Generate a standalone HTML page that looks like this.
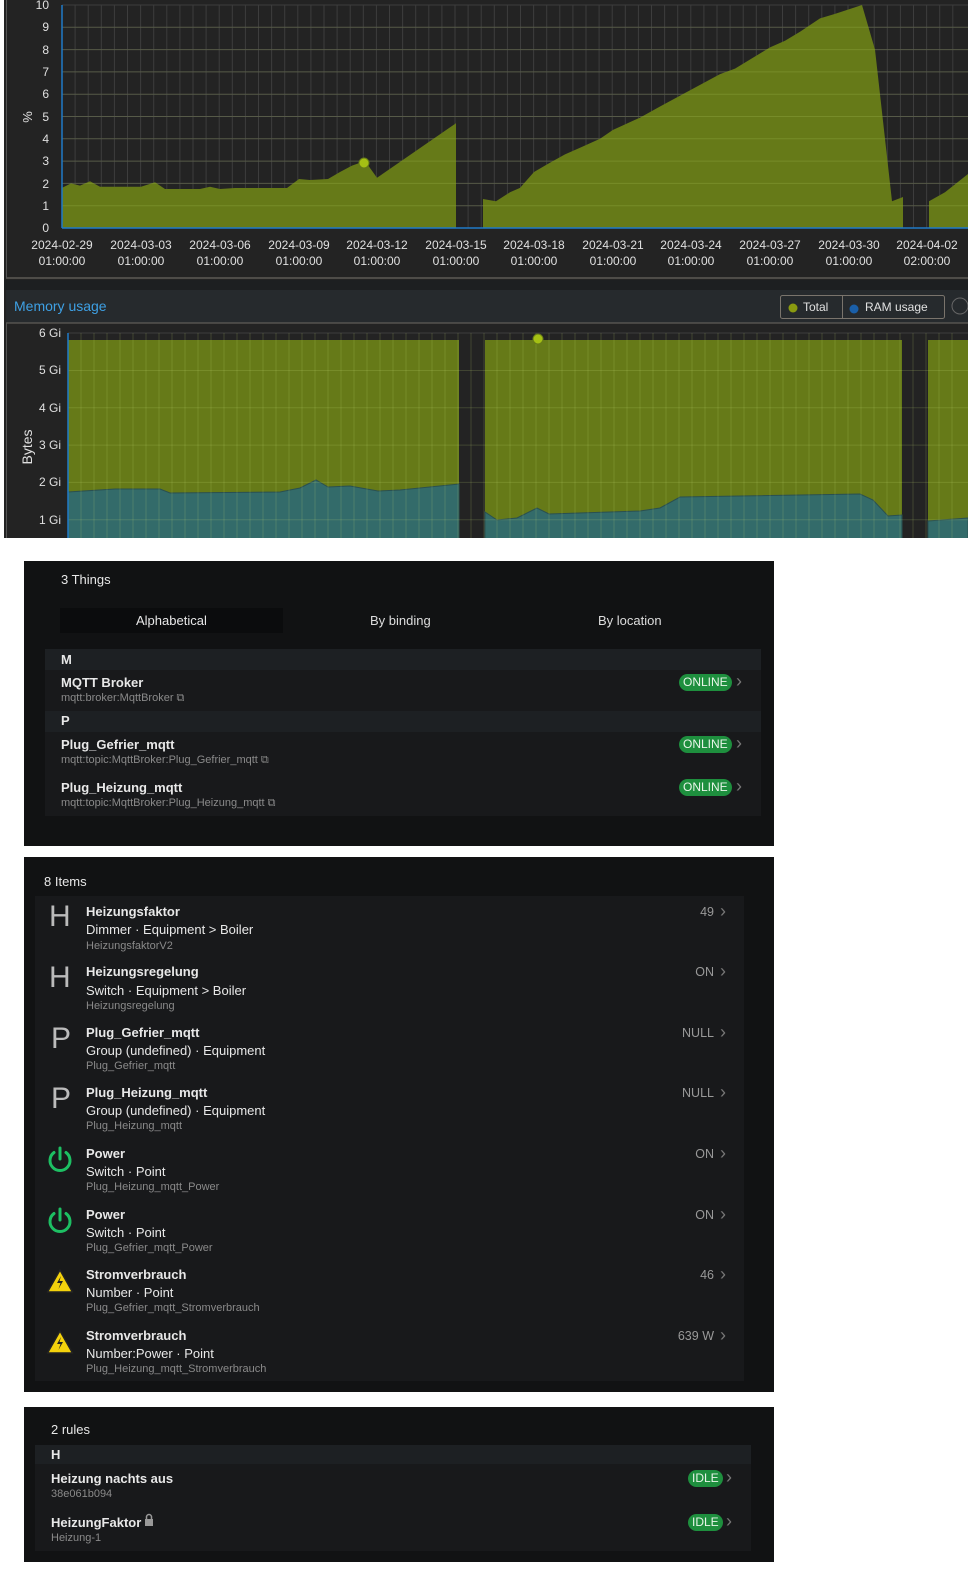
<!DOCTYPE html>
<html><head><meta charset="utf-8"><style>
body{margin:0;width:968px;height:1576px;background:#fff;font-family:"Liberation Sans",sans-serif;position:relative;overflow:hidden}
.abs{position:absolute}
.card{position:absolute;left:24px;width:750px;background:#111213;color:#e8e8e8}
.t{position:absolute;font-size:13px;white-space:nowrap}
.b{font-weight:bold}
.sub{color:#8a8a8a;font-size:11px}
.badge{position:absolute;background:#1e8f3e;color:#e8f5e9;font-size:12px;border-radius:9px;padding:1px 4px;line-height:15px}
.chev{position:absolute;color:#777;font-size:18px;line-height:18px}
.val{position:absolute;color:#999;font-size:12.5px;text-align:right}
</style></head><body>
<svg class="abs" style="left:0;top:0" width="968" height="540" xmlns="http://www.w3.org/2000/svg" font-family="Liberation Sans, sans-serif">
<rect x="4" y="0" width="964" height="540" fill="#232323"/>
<rect x="4" y="280" width="964" height="10" fill="#1d1f21"/>
<line x1="6" y1="278" x2="968" y2="278" stroke="#7a746c" stroke-width="1"/>
<rect x="6" y="290" width="962" height="33" fill="#262a2d"/>
<line x1="6" y1="323" x2="968" y2="323" stroke="#6e6a63"/>
<line x1="6.5" y1="0" x2="6.5" y2="278" stroke="#555"/>
<line x1="6.5" y1="323" x2="6.5" y2="540" stroke="#555"/>
<g stroke="#3d3d3d" stroke-width="1">
<path d="M62 5H968M62 27.3H968M62 49.6H968M62 71.9H968M62 94.2H968M62 116.5H968M62 138.8H968M62 161.1H968M62 183.4H968M62 205.7H968"/>
<path d="M75.1 5V228M88.2 5V228M101.3 5V228M114.4 5V228M127.5 5V228M140.6 5V228M153.7 5V228M166.8 5V228M179.9 5V228M193 5V228M206.1 5V228M219.2 5V228M232.3 5V228M245.4 5V228M258.5 5V228M271.6 5V228M284.7 5V228M297.8 5V228M310.9 5V228M324 5V228M337.1 5V228M350.2 5V228M363.3 5V228M376.4 5V228M389.5 5V228M402.6 5V228M415.7 5V228M428.8 5V228M441.9 5V228M455 5V228M468.1 5V228M481.2 5V228M494.3 5V228M507.4 5V228M520.5 5V228M533.6 5V228M546.7 5V228M559.8 5V228M572.9 5V228M586 5V228M599.1 5V228M612.2 5V228M625.3 5V228M638.4 5V228M651.5 5V228M664.6 5V228M677.7 5V228M690.8 5V228M703.9 5V228M717 5V228M730.1 5V228M743.2 5V228M756.3 5V228M769.4 5V228M782.5 5V228M795.6 5V228M808.7 5V228M821.8 5V228M834.9 5V228M848 5V228M861.1 5V228M874.2 5V228M887.3 5V228M900.4 5V228M913.5 5V228M926.6 5V228M939.7 5V228M952.8 5V228"/>
</g>
<g fill="#667a18">
<polygon points="62,228 62,187.9 71,183.4 80,185.6 90,181.2 100,186.7 141,186.7 155,182.3 165,189 200,189 210,186.7 220,189 235,188 287,188 299,179 310,180 328,179 340,172 352,165.6 365,161 377,177.8 456,123.2 456,228"/>
<polygon points="483,228 483,199 496,201.2 510,192.3 520,187.9 534,172 549,163.3 565,154.4 580,147.7 600,138.8 613,129.9 640,117.6 660,106.5 691,89.7 720,74.1 735,68.6 770,47.4 785,40.7 800,31.8 820,18.4 835,13.9 862,5 875,49.6 892,201.2 903,197 903,228"/>
<polygon points="929,228 929,201.2 945,192.3 968,174 968,228"/>
</g>
<g stroke="rgba(200,220,120,0.18)" stroke-width="1">
<path d="M62 205.7H968M62 183.4H968M62 161.1H968M62 138.8H968M62 116.5H968M62 94.2H968M62 71.9H968M62 49.6H968M62 27.3H968"/>
</g>
<line x1="62" y1="5" x2="62" y2="228" stroke="#1f7ac8" stroke-width="1.5"/>
<line x1="62" y1="228" x2="968" y2="228" stroke="#1f7ac8" stroke-width="1.5"/>
<circle cx="364" cy="163" r="5" fill="#a5c014" stroke="#667a18"/>
<g fill="#e0e0e0" font-size="12" text-anchor="end">
<text x="49" y="9">10</text><text x="49" y="31">9</text><text x="49" y="54">8</text><text x="49" y="76">7</text><text x="49" y="98">6</text><text x="49" y="121">5</text><text x="49" y="143">4</text><text x="49" y="165">3</text><text x="49" y="188">2</text><text x="49" y="210">1</text><text x="49" y="232">0</text>
</g>
<text x="32" y="117" fill="#e0e0e0" font-size="13" transform="rotate(-90 32 117)" text-anchor="middle">%</text>
<g fill="#e0e0e0" font-size="12" text-anchor="middle">
<text x="62" y="249">2024-02-29</text><text x="62" y="265">01:00:00</text>
<text x="141" y="249">2024-03-03</text><text x="141" y="265">01:00:00</text>
<text x="220" y="249">2024-03-06</text><text x="220" y="265">01:00:00</text>
<text x="299" y="249">2024-03-09</text><text x="299" y="265">01:00:00</text>
<text x="377" y="249">2024-03-12</text><text x="377" y="265">01:00:00</text>
<text x="456" y="249">2024-03-15</text><text x="456" y="265">01:00:00</text>
<text x="534" y="249">2024-03-18</text><text x="534" y="265">01:00:00</text>
<text x="613" y="249">2024-03-21</text><text x="613" y="265">01:00:00</text>
<text x="691" y="249">2024-03-24</text><text x="691" y="265">01:00:00</text>
<text x="770" y="249">2024-03-27</text><text x="770" y="265">01:00:00</text>
<text x="849" y="249">2024-03-30</text><text x="849" y="265">01:00:00</text>
<text x="927" y="249">2024-04-02</text><text x="927" y="265">02:00:00</text>
</g>
<text x="14" y="311" fill="#3ea0e4" font-size="14">Memory usage</text>
<rect x="780.5" y="295.5" width="164" height="23" rx="2" fill="#262a2d" stroke="#7a746c"/>
<line x1="842.5" y1="296" x2="842.5" y2="318" stroke="#7a746c"/>
<circle cx="793" cy="308" r="4.5" fill="#8a9a10"/>
<text x="803" y="311" fill="#e0e0e0" font-size="12">Total</text>
<circle cx="854" cy="309" r="4.5" fill="#1a5fa8"/>
<text x="865" y="311" fill="#e0e0e0" font-size="12">RAM usage</text>
<circle cx="960" cy="306" r="8" fill="none" stroke="#666"/>
<g stroke="#3d3d3d"><path d="M68 333H968"/></g>
<g fill="#667a18">
<rect x="68" y="340" width="391" height="200"/>
<rect x="485" y="340" width="417" height="200"/>
<rect x="928" y="340" width="40" height="200"/>
</g>
<g fill="#336b6a" stroke="#2a5050">
<polygon points="68,540 68,492 115,489 160,489 170,493 280,492 300,488 316,480 328,487 350,486 378,491 400,490 459,484 459,540"/>
<polygon points="485,540 485,512 497,520 517,518 537,508 549,514 640,511 660,508 680,497 860,494 873,500 888,516 902,515 902,540"/>
<polygon points="928,540 928,521 968,518 968,540"/>
</g>
<g stroke="rgba(200,220,120,0.18)">
<path d="M68 370.5H968M68 407.8H968M68 445.1H968M68 482.4H968M68 519.7H968"/>
<path d="M81 333V540M94 333V540M107 333V540M120 333V540M133 333V540M146 333V540M159 333V540M172 333V540M185 333V540M198 333V540M211 333V540M224 333V540M237 333V540M250 333V540M263 333V540M276 333V540M289 333V540M302 333V540M315 333V540M328 333V540M341 333V540M354 333V540M367 333V540M380 333V540M393 333V540M406 333V540M419 333V540M432 333V540M445 333V540M458 333V540M471 333V540M484 333V540M497 333V540M510 333V540M523 333V540M536 333V540M549 333V540M562 333V540M575 333V540M588 333V540M601 333V540M614 333V540M627 333V540M640 333V540M653 333V540M666 333V540M679 333V540M692 333V540M705 333V540M718 333V540M731 333V540M744 333V540M757 333V540M770 333V540M783 333V540M796 333V540M809 333V540M822 333V540M835 333V540M848 333V540M861 333V540M874 333V540M887 333V540M900 333V540M913 333V540M926 333V540M939 333V540M952 333V540"/>
</g>
<line x1="68" y1="333" x2="68" y2="540" stroke="#1f7ac8" stroke-width="1.5"/>
<circle cx="538" cy="339" r="5" fill="#a5c014" stroke="#667a18"/>
<g fill="#e0e0e0" font-size="12" text-anchor="end">
<text x="61" y="337">6 Gi</text><text x="61" y="374">5 Gi</text><text x="61" y="412">4 Gi</text><text x="61" y="449">3 Gi</text><text x="61" y="486">2 Gi</text><text x="61" y="524">1 Gi</text>
</g>
<text x="32" y="447" fill="#e0e0e0" font-size="14" transform="rotate(-90 32 447)" text-anchor="middle">Bytes</text>
<rect x="0" y="538" width="968" height="2" fill="#fff"/>
</svg>

<div class="card" style="top:561px;height:285px">
<div class="t" style="left:37px;top:11px">3 Things</div>
<div class="abs" style="left:36px;top:47px;width:223px;height:25px;background:#0b0c0d"></div>
<div class="t" style="left:112px;top:52px">Alphabetical</div>
<div class="t" style="left:346px;top:52px;color:#ddd">By binding</div>
<div class="t" style="left:574px;top:52px;color:#ddd">By location</div>
<div class="abs" style="left:21px;top:88px;width:716px;height:167px;background:#18191b"></div>
<div class="abs" style="left:21px;top:88px;width:716px;height:21px;background:#1d2023"></div>
<div class="abs" style="left:21px;top:150px;width:716px;height:21px;background:#1d2023"></div>
<div class="t b" style="left:37px;top:91px">M</div>
<div class="t b" style="left:37px;top:114px">MQTT Broker</div>
<div class="t sub" style="left:37px;top:131px">mqtt:broker:MqttBroker ⧉</div>
<div class="badge" style="left:655px;top:113px">ONLINE</div><div class="chev" style="left:712px;top:111px">›</div>
<div class="t b" style="left:37px;top:152px">P</div>
<div class="t b" style="left:37px;top:176px">Plug_Gefrier_mqtt</div>
<div class="t sub" style="left:37px;top:193px">mqtt:topic:MqttBroker:Plug_Gefrier_mqtt ⧉</div>
<div class="badge" style="left:655px;top:175px">ONLINE</div><div class="chev" style="left:712px;top:173px">›</div>
<div class="t b" style="left:37px;top:219px">Plug_Heizung_mqtt</div>
<div class="t sub" style="left:37px;top:236px">mqtt:topic:MqttBroker:Plug_Heizung_mqtt ⧉</div>
<div class="badge" style="left:655px;top:218px">ONLINE</div><div class="chev" style="left:712px;top:216px">›</div>
</div>

<div class="card" style="top:857px;height:535px">
<div class="t" style="left:20px;top:17px">8 Items</div>
<div class="abs" style="left:11px;top:39px;width:709px;height:485px;background:#18191b"></div>
</div>
<div class="abs" style="left:24px;top:896px;width:750px;color:#e8e8e8">
<div class="abs" style="left:25px;top:4px;font-size:30px;color:#bbb">H</div>
<div class="t b" style="left:62px;top:8px">Heizungsfaktor</div>
<div class="t" style="left:62px;top:26px">Dimmer · Equipment &gt; Boiler</div>
<div class="t sub" style="left:62px;top:44px">HeizungsfaktorV2</div>
<div class="val" style="left:650px;top:9px;width:40px">49</div><div class="chev" style="left:696px;top:6px">›</div>

<div class="abs" style="left:25px;top:65px;font-size:30px;color:#bbb">H</div>
<div class="t b" style="left:62px;top:68px">Heizungsregelung</div>
<div class="t" style="left:62px;top:87px">Switch · Equipment &gt; Boiler</div>
<div class="t sub" style="left:62px;top:104px">Heizungsregelung</div>
<div class="val" style="left:650px;top:69px;width:40px">ON</div><div class="chev" style="left:696px;top:66px">›</div>

<div class="abs" style="left:27px;top:126px;font-size:30px;color:#bbb">P</div>
<div class="t b" style="left:62px;top:129px">Plug_Gefrier_mqtt</div>
<div class="t" style="left:62px;top:147px">Group (undefined) · Equipment</div>
<div class="t sub" style="left:62px;top:164px">Plug_Gefrier_mqtt</div>
<div class="val" style="left:640px;top:130px;width:50px">NULL</div><div class="chev" style="left:696px;top:127px">›</div>

<div class="abs" style="left:27px;top:186px;font-size:30px;color:#bbb">P</div>
<div class="t b" style="left:62px;top:189px">Plug_Heizung_mqtt</div>
<div class="t" style="left:62px;top:207px">Group (undefined) · Equipment</div>
<div class="t sub" style="left:62px;top:224px">Plug_Heizung_mqtt</div>
<div class="val" style="left:640px;top:190px;width:50px">NULL</div><div class="chev" style="left:696px;top:187px">›</div>

<svg class="abs" style="left:22px;top:250px" width="28" height="28" viewBox="0 0 28 28"><path d="M8 6.5A10 10 0 1 0 20 6.5" fill="none" stroke="#1dbf63" stroke-width="3" stroke-linecap="round"/><line x1="14" y1="2" x2="14" y2="13" stroke="#1dbf63" stroke-width="3" stroke-linecap="round"/></svg>
<div class="t b" style="left:62px;top:250px">Power</div>
<div class="t" style="left:62px;top:268px">Switch · Point</div>
<div class="t sub" style="left:62px;top:285px">Plug_Heizung_mqtt_Power</div>
<div class="val" style="left:650px;top:251px;width:40px">ON</div><div class="chev" style="left:696px;top:248px">›</div>

<svg class="abs" style="left:22px;top:311px" width="28" height="28" viewBox="0 0 28 28"><path d="M8 6.5A10 10 0 1 0 20 6.5" fill="none" stroke="#1dbf63" stroke-width="3" stroke-linecap="round"/><line x1="14" y1="2" x2="14" y2="13" stroke="#1dbf63" stroke-width="3" stroke-linecap="round"/></svg>
<div class="t b" style="left:62px;top:311px">Power</div>
<div class="t" style="left:62px;top:329px">Switch · Point</div>
<div class="t sub" style="left:62px;top:346px">Plug_Gefrier_mqtt_Power</div>
<div class="val" style="left:650px;top:312px;width:40px">ON</div><div class="chev" style="left:696px;top:309px">›</div>

<svg class="abs" style="left:22px;top:372px" width="28" height="26" viewBox="0 0 28 26"><path d="M14 2L26.5 24H1.5Z" fill="#f4d20c" stroke="#222" stroke-width="1.5" stroke-linejoin="round"/><path d="M15 8L11 15H14.5L12.5 21L17 13H13.5Z" fill="#222"/></svg>
<div class="t b" style="left:62px;top:371px">Stromverbrauch</div>
<div class="t" style="left:62px;top:389px">Number · Point</div>
<div class="t sub" style="left:62px;top:406px">Plug_Gefrier_mqtt_Stromverbrauch</div>
<div class="val" style="left:650px;top:372px;width:40px">46</div><div class="chev" style="left:696px;top:369px">›</div>

<svg class="abs" style="left:22px;top:433px" width="28" height="26" viewBox="0 0 28 26"><path d="M14 2L26.5 24H1.5Z" fill="#f4d20c" stroke="#222" stroke-width="1.5" stroke-linejoin="round"/><path d="M15 8L11 15H14.5L12.5 21L17 13H13.5Z" fill="#222"/></svg>
<div class="t b" style="left:62px;top:432px">Stromverbrauch</div>
<div class="t" style="left:62px;top:450px">Number:Power · Point</div>
<div class="t sub" style="left:62px;top:467px">Plug_Heizung_mqtt_Stromverbrauch</div>
<div class="val" style="left:630px;top:433px;width:60px">639 W</div><div class="chev" style="left:696px;top:430px">›</div>
</div>

<div class="card" style="top:1407px;height:155px">
<div class="t" style="left:27px;top:15px">2 rules</div>
<div class="abs" style="left:11px;top:38px;width:716px;height:106px;background:#18191b"></div>
<div class="abs" style="left:11px;top:38px;width:716px;height:19px;background:#1d2023"></div>
<div class="t b" style="left:27px;top:40px">H</div>
<div class="t b" style="left:27px;top:64px">Heizung nachts aus</div>
<div class="t sub" style="left:27px;top:81px">38e061b094</div>
<div class="badge" style="left:664px;top:63px">IDLE</div><div class="chev" style="left:702px;top:61px">›</div>
<div class="t b" style="left:27px;top:108px">HeizungFaktor</div>
<svg class="abs" style="left:120px;top:106px" width="10" height="13" viewBox="0 0 10 13"><path d="M2.5 6V4a2.5 2.5 0 0 1 5 0v2" fill="none" stroke="#999" stroke-width="1.5"/><rect x="1" y="6" width="8" height="7" fill="#999"/></svg>
<div class="t sub" style="left:27px;top:125px">Heizung-1</div>
<div class="badge" style="left:664px;top:107px">IDLE</div><div class="chev" style="left:702px;top:105px">›</div>
</div>
</body></html>
